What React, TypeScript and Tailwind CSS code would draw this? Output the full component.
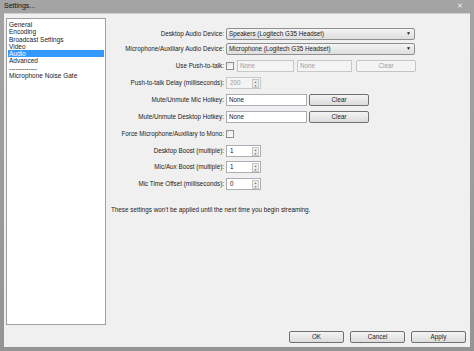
import React from 'react'

const items = ['General', 'Encoding', 'Broadcast Settings', 'Video', 'Audio', 'Advanced', '-------------', 'Microphone Noise Gate']

const Combo = ({ value }: { value: string }) => (
    <div className="w-[189px] h-[12px] flex items-center justify-between border border-[#8e8f8f] rounded-[2px] bg-gradient-to-b from-[#f4f4f4] to-[#dedede] pl-[2px] pr-[3px]">
        <span>{value}</span>
        <span className="text-[5px] text-[#222]">▼</span>
    </div>
)

const Btn = ({ label, disabled, w = 'w-[60px]' }: { label: string; disabled?: boolean; w?: string }) => (
    <div
        className={
            disabled
                ? `${w} h-[12px] flex items-center justify-center border border-[#c4c4c4] rounded-[2px] bg-[#f4f4f4] text-[#a0a0a0]`
                : `${w} h-[12px] flex items-center justify-center border border-[#707070] rounded-[2px] bg-gradient-to-b from-[#f4f4f4] to-[#dcdcdc]`
        }
    >
        {label}
    </div>
)

const Field = ({ value, w, disabled }: { value: string; w: string; disabled?: boolean }) => (
    <div
        className={
            disabled
                ? `${w} h-[12px] flex items-center border border-[#c8c8c8] bg-[#f4f4f4] text-[#a0a0a0] pl-[2px]`
                : `${w} h-[12px] flex items-center border border-[#abadb3] bg-white pl-[2px]`
        }
    >
        {value}
    </div>
)

const Spin = ({ value, disabled }: { value: string; disabled?: boolean }) => (
    <div
        className={
            disabled
                ? 'w-[35px] h-[12px] flex items-center justify-between border border-[#c8c8c8] bg-[#f4f4f4] text-[#a0a0a0] pl-[3px] pr-[1px]'
                : 'w-[35px] h-[12px] flex items-center justify-between border border-[#abadb3] bg-white pl-[3px] pr-[1px]'
        }
    >
        <span>{value}</span>
        <div className="w-[7px] h-[9px] flex flex-col border border-[#c8c8c8] bg-[#ececec] text-[3px] leading-[4px] text-center text-[#666]">
            <span>▲</span>
            <span>▼</span>
        </div>
    </div>
)

const Check = () => <div className="w-[8px] h-[8px] border border-[#8f8f8f] bg-gradient-to-br from-[#e6e6e6] to-white" />

const Row = ({ label, children, gap = 'mt-[5px]' }: { label: string; children: React.ReactNode; gap?: string }) => (
    <div className={`flex items-center h-[12px] ${gap}`}>
        <div className="w-[120px] text-right pr-[2px] whitespace-nowrap">{label}</div>
        <div className="flex items-center">{children}</div>
    </div>
)

const App = () => {
    return (
        <div className="w-[474px] h-[351px] flex flex-col bg-gradient-to-b from-[#a4a4a4] to-[#949494] font-['Liberation_Sans',Arial,sans-serif] text-[6.3px] text-[#1a1a1a] overflow-hidden">
            <div className="h-[13px] flex items-center justify-between px-[4px]">
                <span className="text-[7px] text-[#111]">Settings...</span>
                <span className="text-[7px] text-[#ececec] mr-[7px]">✕</span>
            </div>
            <div className="flex-1 mx-[4px] mb-[4px] bg-[#f0f0f0] border-t border-[#d0d0d0] flex flex-col">
                <div className="flex pt-[4px] px-[2px]">
                    <div className="w-[100px] h-[307px] bg-white border border-[#a0a0a0] pt-[2px] px-[1px] leading-[7.3px] text-[6.5px]">
                        {items.map((it) => (
                            <div
                                key={it}
                                className={it === 'Audio' ? 'bg-[#3399ff] text-white pl-[1px]' : 'pl-[1px]'}
                            >
                                {it}
                            </div>
                        ))}
                    </div>
                    <div className="flex-1 flex flex-col pt-[10px]">
                        <Row label="Desktop Audio Device:" gap="">
                            <Combo value="Speakers (Logitech G35 Headset)" />
                        </Row>
                        <Row label="Microphone/Auxiliary Audio Device:" gap="mt-[3px]">
                            <Combo value="Microphone (Logitech G35 Headset)" />
                        </Row>
                        <Row label="Use Push-to-talk:">
                            <Check />
                            <div className="ml-[3px]">
                                <Field value="None" w="w-[57px]" disabled />
                            </div>
                            <div className="ml-[3px]">
                                <Field value="None" w="w-[55px]" disabled />
                            </div>
                            <div className="ml-[4px]">
                                <Btn label="Clear" disabled />
                            </div>
                        </Row>
                        <Row label="Push-to-talk Delay (milliseconds):">
                            <Spin value="200" disabled />
                        </Row>
                        <Row label="Mute/Unmute Mic Hotkey:">
                            <Field value="None" w="w-[81px]" />
                            <div className="ml-[2px]">
                                <Btn label="Clear" />
                            </div>
                        </Row>
                        <Row label="Mute/Unmute Desktop Hotkey:">
                            <Field value="None" w="w-[81px]" />
                            <div className="ml-[2px]">
                                <Btn label="Clear" />
                            </div>
                        </Row>
                        <Row label="Force Microphone/Auxiliary to Mono:">
                            <Check />
                        </Row>
                        <Row label="Desktop Boost (multiple):">
                            <Spin value="1" />
                        </Row>
                        <Row label="Mic/Aux Boost (multiple):" gap="mt-[4px]">
                            <Spin value="1" />
                        </Row>
                        <Row label="Mic Time Offset (milliseconds):">
                            <Spin value="0" />
                        </Row>
                        <div className="mt-[15px] pl-[5px]">
                            These settings won't be applied until the next time you begin streaming.
                        </div>
                    </div>
                </div>
                <div className="flex justify-end gap-[6px] mt-[6px] pr-[4px]">
                    <Btn label="OK" w="w-[55px]" />
                    <Btn label="Cancel" w="w-[55px]" />
                    <Btn label="Apply" w="w-[55px]" />
                </div>
            </div>
        </div>
    )
}

export default App
